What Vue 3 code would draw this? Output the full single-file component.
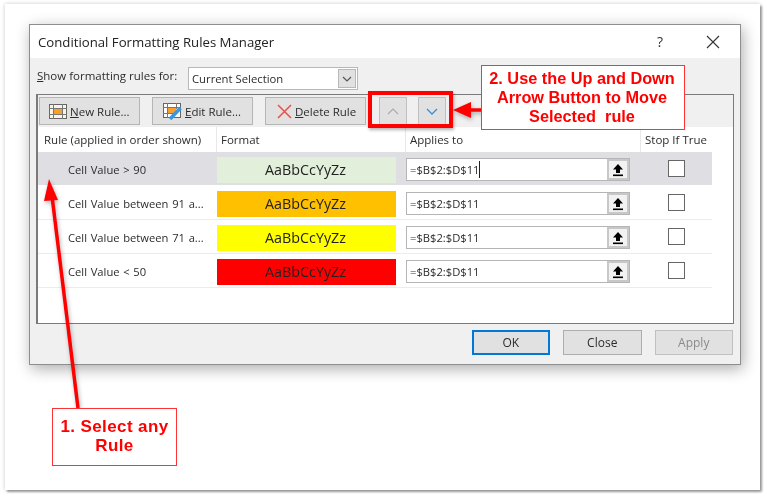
<script setup>
const rules = [
  { name: 'Cell Value > 90', color: '#e2efda', selected: true },
  { name: 'Cell Value between 91 a...', color: '#ffc000' },
  { name: 'Cell Value between 71 a...', color: '#ffff00' },
  { name: 'Cell Value < 50', color: '#ff0000' }
]
</script>

<template>
  <div class="page">
    <div class="frame">
      <div class="dialog">
        <div class="titlebar">
          <span class="title">Conditional Formatting Rules Manager</span>
          <span class="help">?</span>
          <svg class="close" width="14" height="14" viewBox="0 0 14 14"><path d="M1 1L13 13M13 1L1 13" stroke="#333" stroke-width="1.1" fill="none"/></svg>
        </div>
        <div class="body">
          <div class="filter">
            <span class="label"><u>S</u>how formatting rules for:</span>
            <div class="combo">
              <span>Current Selection</span>
              <span class="combo-btn">
                <svg width="10" height="6" viewBox="0 0 10 6"><path d="M1 1L5 5L9 1" stroke="#555" stroke-width="1.2" fill="none"/></svg>
              </span>
            </div>
          </div>
          <div class="panel">
            <div class="toolbar">
              <button class="tbtn new">
                <svg width="18" height="15" viewBox="0 0 18 15">
                  <rect x="0.5" y="0.5" width="17" height="14" fill="#fdf3e4" stroke="#666"/>
                  <rect x="5" y="4" width="8" height="7" fill="#f7a030"/>
                  <path d="M0 4.5H18M0 10.5H18M4.5 0V15M13.5 0V15" stroke="#777" fill="none"/>
                </svg>
                <span class="tlabel"><u>N</u>ew Rule...</span>
              </button>
              <button class="tbtn edit">
                <svg width="19" height="17" viewBox="0 0 19 17">
                  <rect x="0.5" y="0.5" width="17" height="14" fill="#fff" stroke="#666"/>
                  <rect x="5" y="4" width="8" height="6" fill="#f7a030"/>
                  <path d="M0 4.5H18M0 10.5H10M4.5 0V15M13.5 0V6" stroke="#777" fill="none"/>
                  <path d="M7 16L17.5 5" stroke="#3a96dd" stroke-width="3.6" fill="none"/>
                </svg>
                <span class="tlabel"><u>E</u>dit Rule...</span>
              </button>
              <button class="tbtn del">
                <svg width="15" height="15" viewBox="0 0 15 15"><path d="M1 1L14 14M14 1L1 14" stroke="#e8504a" stroke-width="1.5" fill="none"/></svg>
                <span class="tlabel"><u>D</u>elete Rule</span>
              </button>
              <button class="arrow-btn">
                <svg width="12" height="7" viewBox="0 0 12 7"><path d="M1 6L6 1L11 6" stroke="#aaa" stroke-width="1.1" fill="none"/></svg>
              </button>
              <button class="arrow-btn">
                <svg width="12" height="7" viewBox="0 0 12 7"><path d="M1 1L6 6L11 1" stroke="#3b8fd0" stroke-width="1.3" fill="none"/></svg>
              </button>
            </div>
            <div class="list">
              <div class="row head">
                <span class="cell-rule-h">Rule (applied in order shown)</span>
                <span class="cell-h">Format</span>
                <span class="cell-h">Applies to</span>
                <span class="cell-h stop">Stop If True</span>
              </div>
              <div v-for="rule in rules" :key="rule.name" class="row item" :class="{ selected: rule.selected }">
                <span class="cell-rule">{{ rule.name }}</span>
                <span class="cell-format"><span class="swatch" :style="{ background: rule.color }">AaBbCcYyZz</span></span>
                <span class="cell-applies">
                  <span class="input">
                    <span class="ref">=$B$2:$D$11<i v-if="rule.selected" class="caret"></i></span>
                    <span class="picker">
                      <svg width="12" height="14" viewBox="0 0 12 14"><path d="M6 1L11 6.5H8V10H4V6.5H1Z" fill="#000"/><rect x="1" y="11.5" width="10" height="1.6" fill="#000"/></svg>
                    </span>
                  </span>
                </span>
                <span class="cell-check"><span class="check"></span></span>
              </div>
            </div>
          </div>
          <div class="footer">
            <button class="fbtn ok">OK</button>
            <button class="fbtn">Close</button>
            <button class="fbtn off">Apply</button>
          </div>
        </div>
      </div>
    </div>

    <svg class="arrows" width="768" height="499" viewBox="0 0 768 499">
      <path d="M78 408L52 196" stroke="#f00" stroke-width="3.5" fill="none"/>
      <path d="M49 179L58 200L44 201Z" fill="#f00"/>
      <path d="M483 110H466" stroke="#f00" stroke-width="3.5" fill="none"/>
      <path d="M453 110L471 102V118Z" fill="#f00"/>
    </svg>
    <div class="highlight"></div>
    <div class="callout top">2. Use the Up and Down<br>Arrow Button to Move<br>Selected&nbsp; rule</div>
    <div class="callout bottom">1. Select any<br>Rule</div>
  </div>
</template>

<style>
html, body { margin: 0; background: #fff; }
</style>

<style scoped>
.page {
  position: relative;
  width: 768px;
  height: 499px;
  box-sizing: border-box;
  padding-top: 4px;
  overflow: hidden;
  background: #fff;
  font-family: "Open Sans", "Noto Sans", sans-serif;
  font-size: 11.5px;
  color: #2c2c2c;
  filter: blur(0.4px);
}
.frame {
  margin-left: 5px;
  width: 755px;
  height: 486px;
  padding: 20px 0 0 24px;
  box-sizing: border-box;
  background: #fff;
  box-shadow: 0 0 4px rgba(0, 0, 0, 0.22), 2px 2px 2px rgba(0, 0, 0, 0.35);
}
.dialog {
  width: 712px;
  height: 341px;
  box-sizing: border-box;
  border: 1px solid #8e8e8e;
  background: #f0f0f0;
  box-shadow: 2px 4px 14px rgba(0, 0, 0, 0.32);
  display: flex;
  flex-direction: column;
}
.titlebar {
  height: 33px;
  flex: none;
  background: #fff;
  display: flex;
  align-items: center;
  padding: 0 20px 0 8px;
}
.title { font-size: 13.2px; color: #222; flex: 1; }
.help { font-size: 14px; margin-right: 43px; color: #333; }
.body { flex: 1; padding: 0 6px; display: flex; flex-direction: column; }
.filter { height: 36px; display: flex; align-items: center; padding-left: 1px; flex: none; }
.label { width: 151px; font-size: 11.5px; margin-bottom: 2px; }
.combo {
  width: 170px;
  height: 23px;
  box-sizing: border-box;
  border: 1px solid #b8b8b8;
  background: #fff;
  display: flex;
  align-items: center;
  justify-content: space-between;
  padding-left: 3px;
  margin-top: 5px;
  font-size: 11.3px;
}
.combo-btn {
  width: 18px;
  height: 19px;
  margin-right: 1px;
  background: #e1e1e1;
  border: 1px solid #b8b8b8;
  box-sizing: border-box;
  display: flex;
  align-items: center;
  justify-content: center;
}
.panel {
  height: 230px;
  flex: none;
  box-sizing: border-box;
  border: 1px solid #7a7a7a;
  border-left-width: 2px;
  display: flex;
  flex-direction: column;
}
.toolbar {
  height: 32px;
  flex: none;
  display: flex;
  align-items: center;
  padding-left: 1px;
}
button { font: inherit; color: inherit; box-sizing: border-box; padding: 0; }
.tbtn {
  width: 101px;
  height: 28px;
  margin-right: 12px;
  background: #e1e1e1;
  border: 1px solid #b5b5b5;
  display: flex;
  align-items: center;
  gap: 3px;
}
.tbtn.new { padding-left: 9px; }
.tbtn.edit { padding-left: 10px; }
.tbtn.del { padding-left: 11px; margin-right: 13px; }
.tlabel { padding-top: 1px; }
.arrow-btn {
  width: 28px;
  height: 28px;
  margin-right: 11px;
  background: #e1e1e1;
  border: 1px solid #c0c0c0;
  display: flex;
  align-items: center;
  justify-content: center;
}
.list { flex: 1; background: #fff; }
.row {
  display: grid;
  grid-template-columns: 178px 189px 235px 72px;
  width: 674px;
}
.head { height: 25px; align-items: center; }
.cell-rule-h { padding-left: 6px; }
.cell-h { padding-left: 4px; border-left: 1px solid #e8e8e8; height: 100%; line-height: 25px; }
.cell-h.stop { white-space: nowrap; }
.item {
  height: 34px;
  padding-top: 2px;
  border-bottom: 1px solid #ececec;
  box-sizing: border-box;
  align-items: center;
}
.item.selected { background: #dedee3; border-bottom-color: #fff; }
.cell-rule { padding-left: 30px; white-space: nowrap; font-size: 11.2px; word-spacing: 0.8px; }
.cell-format { display: flex; padding-left: 1px; }
.swatch {
  width: 179px;
  height: 26px;
  display: flex;
  align-items: center;
  justify-content: center;
  font-size: 14.3px;
  color: #222;
  padding-right: 2px;
  box-sizing: border-box;
}
.cell-applies { display: flex; padding-left: 1px; }
.input {
  width: 224px;
  height: 23px;
  box-sizing: border-box;
  border: 1px solid #b5b5b5;
  background: #fff;
  display: flex;
  align-items: center;
  justify-content: space-between;
}
.ref { padding-left: 3px; display: flex; align-items: center; font-size: 11.2px; }
.caret { width: 1px; height: 17px; background: #222; display: block; }
.picker {
  width: 22px;
  height: 21px;
  box-sizing: border-box;
  border: 2px solid #c8c8c8;
  background: #f2f2f2;
  display: flex;
  align-items: center;
  justify-content: center;
}
.cell-check { display: flex; padding-left: 28px; }
.check {
  width: 15px;
  height: 15px;
  margin-top: -2px;
  border: 1px solid #666;
  background: #fff;
  display: block;
}
.footer { display: flex; justify-content: flex-end; gap: 13px; padding: 6px 1px 0 0; }
.fbtn {
  width: 78.5px;
  height: 25px;
  background: #e1e1e1;
  border: 1px solid #adadad;
  font-size: 12px;
}
.fbtn.ok { border: 1px solid #0078d7; box-shadow: inset 0 0 0 1px #0078d7; }
.fbtn.off { color: #8a8a8a; border-color: #c0c0c0; }
.arrows { position: absolute; left: 0; top: 0; pointer-events: none; filter: drop-shadow(1px 2px 2px rgba(0, 0, 0, 0.3)); }
.highlight {
  position: absolute;
  left: 368px;
  top: 91px;
  width: 85px;
  height: 37px;
  box-sizing: border-box;
  border: 4px solid #f00;
  box-shadow: 1px 2px 3px rgba(0, 0, 0, 0.3);
}
.callout {
  position: absolute;
  box-sizing: border-box;
  background: #fff;
  border: 1px solid #f33;
  color: #f00;
  font-family: "Liberation Sans", Arial, sans-serif;
  font-weight: 700;
  text-align: center;
}
.callout.top {
  left: 481px;
  top: 65px;
  width: 204px;
  height: 65px;
  padding: 3px 2px 0 0;
  font-size: 16.3px;
  line-height: 18.9px;
}
.callout.bottom {
  left: 52px;
  top: 408px;
  width: 125px;
  height: 58px;
  padding-top: 8px;
  font-size: 17px;
  line-height: 19px;
  letter-spacing: 0.4px;
}
</style>
